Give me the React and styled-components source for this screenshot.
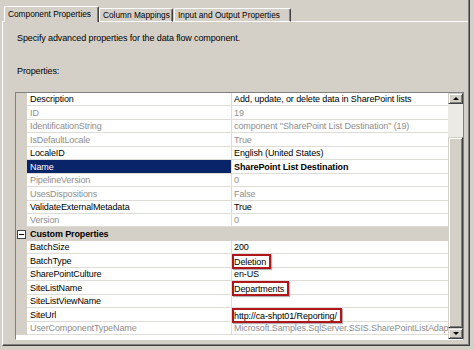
import React from 'react';
import styled, { createGlobalStyle } from 'styled-components';

const Global = createGlobalStyle`
  html, body { margin: 0; padding: 0; background: #d4d0c8; }
  body {
    font-family: "Liberation Sans", Arial, sans-serif;
    font-size: 9px;
    letter-spacing: -0.12px;
    color: #000;
  }
  * { box-sizing: border-box; }
`;

const Page = styled.div`
  width: 474px;
  height: 350px;
  overflow: hidden;
  background: #d4d0c8;
`;

const TabStrip = styled.div`
  display: flex;
  align-items: flex-end;
  height: 22px;
  width: 468px;
  margin-left: 2px;
  border-right: 1px solid #404040;
  box-shadow: inset -1px 0 0 #808080;
`;

const StripLine = styled.div`
  flex: ${(p) => (p.$w ? `0 0 ${p.$w}px` : '1 1 auto')};
  height: 1px;
  margin-right: ${(p) => (p.$w ? 0 : 1)}px;
  background: #fff;
`;

const Tab = styled.div`
  flex: 0 0 ${(p) => p.$w}px;
  height: ${(p) => (p.$active ? 16 : 14)}px;
  border-top: 1px solid #fff;
  border-left: 1px solid #fff;
  border-right: 1px solid #404040;
  border-bottom: ${(p) => (p.$active ? 'none' : '1px solid #fff')};
  border-top-left-radius: 2px;
  border-top-right-radius: 2px;
  box-shadow: inset -1px 0 0 #808080;
  padding-left: 3px;
  font-size: 8.3px;
  letter-spacing: 0;
  line-height: ${(p) => (p.$active ? 14 : 12)}px;
  white-space: nowrap;
  overflow: hidden;
`;

const Panel = styled.div`
  width: 468px;
  height: 324px;
  margin-left: 2px;
  border-left: 1px solid #fff;
  border-right: 1px solid #404040;
  border-bottom: 1px solid #404040;
  box-shadow: inset -1px -1px 0 #808080;
  padding: 10px 0 0 12px;
`;

const Caption = styled.div`
  padding-left: 2px;
  line-height: 13px;
  margin-top: ${(p) => p.$mt || 0}px;
  white-space: nowrap;
`;

const Grid = styled.div`
  margin-top: 14px;
  width: 449px;
  height: 248px;
  display: flex;
  background: #fff;
  border: 1px solid;
  border-color: #808080 #808080 #fff #808080;
`;

const Rows = styled.div`
  flex: 0 0 432px;
  display: flex;
  flex-direction: column;
`;

const Row = styled.div`
  display: flex;
  height: ${(p) => p.$h}px;
  background: ${(p) => (p.$cat ? '#d4d0c8' : '#fff')};
`;

const Gutter = styled.div`
  flex: 0 0 11px;
  background: #d4d0c8;
  display: flex;
  align-items: center;
`;

const NameCell = styled.div`
  flex: 0 0 205px;
  padding-left: 3px;
  border-right: 1px solid #dedcd7;
  border-bottom: 1px solid #dedcd7;
  background: ${(p) => (p.$sel ? '#0a246a' : '#fff')};
  color: ${(p) => (p.$sel ? '#fff' : p.$ro ? '#8e8e8e' : '#000')};
  display: flex;
  align-items: center;
  white-space: nowrap;
  overflow: hidden;
`;

const ValueCell = styled.div`
  flex: 0 0 216px;
  padding-left: 2px;
  border-bottom: 1px solid #dedcd7;
  color: ${(p) => (p.$ro ? '#8e8e8e' : '#000')};
  font-weight: ${(p) => (p.$bold ? 700 : 400)};
  display: flex;
  align-items: center;
  white-space: nowrap;
  overflow: ${(p) => (p.$open ? 'visible' : 'hidden')};
`;

const CatLabel = styled.div`
  flex: 1 1 auto;
  padding-left: 3px;
  font-weight: 700;
  display: flex;
  align-items: center;
  white-space: nowrap;
`;

const Expander = styled.div`
  width: 9px;
  height: 9px;
  margin-left: 1px;
  margin-top: 1px;
  border: 1px solid #404040;
  background: #fff;
  display: flex;
  align-items: center;
  justify-content: center;
  &::before {
    content: '';
    width: 5px;
    height: 1px;
    background: #000;
  }
`;

const Mark = styled.span`
  display: inline-flex;
  align-items: center;
  height: calc(100% + 2px);
  margin-left: -2px;
  padding: 0 3px 0 0;
  border: 2px solid #b0151c;
  box-shadow: 1px 1px 1px rgba(0, 0, 0, 0.3);
  position: relative;
  top: 1px;
  z-index: 1;
`;

const Filler = styled.div`
  flex: 1 1 auto;
  background: #fff;
`;

const ScrollBar = styled.div`
  flex: 0 0 15px;
  display: flex;
  flex-direction: column;
  background: #d4d0c8;
`;

const Raised = styled.div`
  flex: ${(p) => p.$flex};
  border: 1px solid;
  border-color: #d4d0c8 #404040 #404040 #d4d0c8;
  box-shadow: inset 1px 1px 0 #fff, inset -1px -1px 0 #808080;
  background: #d4d0c8;
  display: flex;
  align-items: center;
  justify-content: center;
`;

const Track = styled.div`
  flex: 0 0 ${(p) => p.$h}px;
  background: #eceae5;
`;

const Arrow = styled.div`
  width: 0;
  height: 0;
  border-left: 3px solid transparent;
  border-right: 3px solid transparent;
  ${(p) =>
    p.$down
      ? 'border-top: 3px solid #000;'
      : 'border-bottom: 3px solid #000;'}
`;

const rows = [
  { n: 'Description', v: 'Add, update, or delete data in SharePoint lists' },
  { n: 'ID', v: '19', ro: true },
  { n: 'IdentificationString', v: 'component "SharePoint List Destination" (19)', ro: true },
  { n: 'IsDefaultLocale', v: 'True', ro: true },
  { n: 'LocaleID', v: 'English (United States)' },
  { n: 'Name', v: 'SharePoint List Destination', sel: true, bold: true },
  { n: 'PipelineVersion', v: '0', ro: true },
  { n: 'UsesDispositions', v: 'False', ro: true },
  { n: 'ValidateExternalMetadata', v: 'True' },
  { n: 'Version', v: '0', ro: true },
  { cat: 'Custom Properties' },
  { n: 'BatchSize', v: '200' },
  { n: 'BatchType', v: 'Deletion', mark: true },
  { n: 'SharePointCulture', v: 'en-US' },
  { n: 'SiteListName', v: 'Departments', mark: true },
  { n: 'SiteListViewName', v: '' },
  { n: 'SiteUrl', v: 'http://ca-shpt01/Reporting/', mark: true },
  {
    n: 'UserComponentTypeName',
    v: 'Microsoft.Samples.SqlServer.SSIS.SharePointListAdapters.SharePointListDestination',
    ro: true,
  },
];

const TOTAL = 242;
const rowH = (i) =>
  Math.round(((i + 1) * TOTAL) / rows.length) - Math.round((i * TOTAL) / rows.length);

export default function App() {
  return (
    <Page>
      <Global />
      <TabStrip>
        <StripLine $w={2} />
        <Tab $w={95} $active>Component Properties</Tab>
        <Tab $w={74}>Column Mappings</Tab>
        <StripLine $w={1} />
        <Tab $w={117}>Input and Output Properties</Tab>
        <StripLine />
      </TabStrip>
      <Panel>
        <Caption>Specify advanced properties for the data flow component.</Caption>
        <Caption $mt={20}>Properties:</Caption>
        <Grid>
          <Rows>
            {rows.map((r, i) =>
              r.cat ? (
                <Row key={i} $h={rowH(i)} $cat>
                  <Gutter>
                    <Expander />
                  </Gutter>
                  <CatLabel>{r.cat}</CatLabel>
                </Row>
              ) : (
                <Row key={i} $h={rowH(i)}>
                  <Gutter />
                  <NameCell $sel={r.sel} $ro={r.ro}>
                    {r.n}
                  </NameCell>
                  <ValueCell $ro={r.ro} $bold={r.bold} $open={r.mark}>
                    {r.mark ? <Mark>{r.v}</Mark> : r.v}
                  </ValueCell>
                </Row>
              )
            )}
            <Filler />
          </Rows>
          <ScrollBar>
            <Raised $flex="0 0 11px">
              <Arrow />
            </Raised>
            <Track $h={33} />
            <Raised $flex="1 1 auto" />
            <Raised $flex="0 0 11px">
              <Arrow $down />
            </Raised>
          </ScrollBar>
        </Grid>
      </Panel>
    </Page>
  );
}
